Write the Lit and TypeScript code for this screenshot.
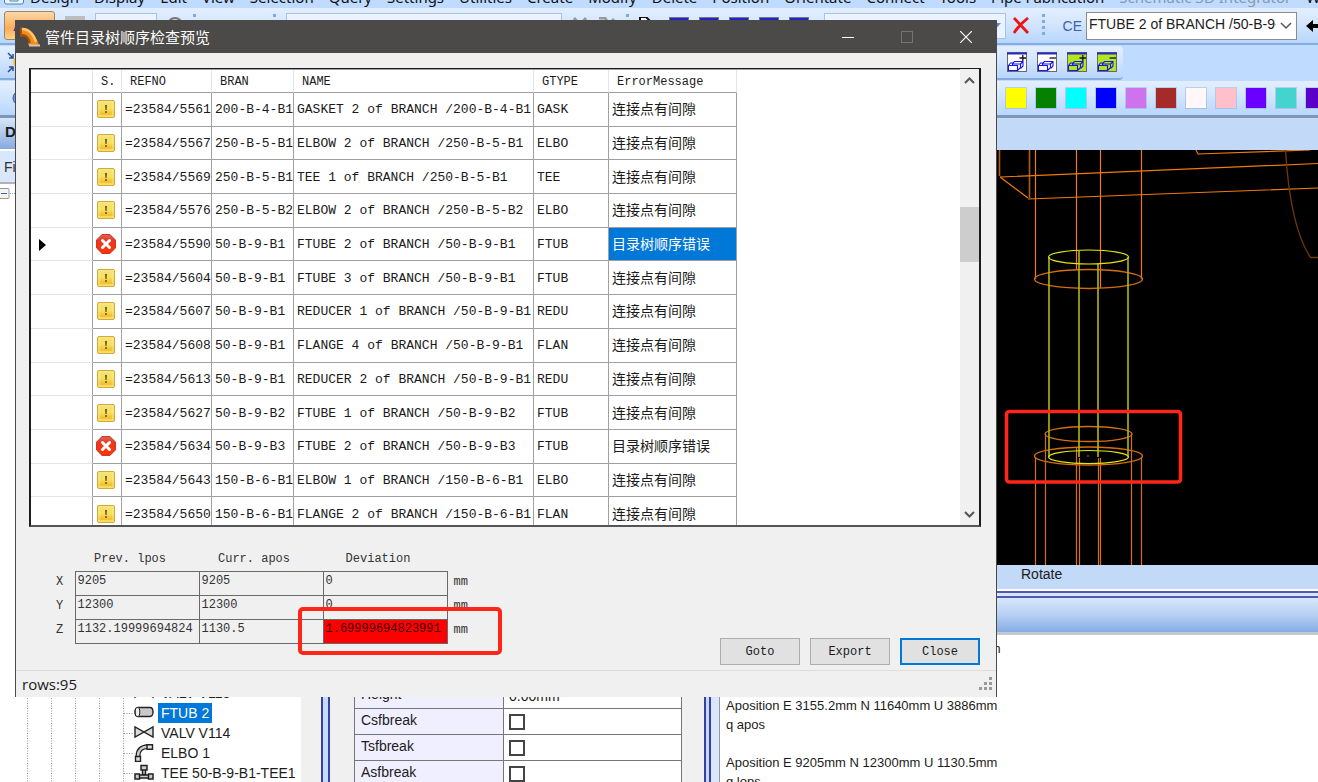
import { LitElement, html, css, svg } from "lit";
import { customElement, state } from "lit/decorators.js";
import { classMap } from "lit/directives/class-map.js";

interface Row {
  refno: string;
  bran: string;
  name: string;
  gtype: string;
  fault?: boolean;
}

const GAP_TEXT = "连接点有间隙";
const ORDER_TEXT = "目录树顺序错误";

const ROWS: Row[] = [
  { refno: "=23584/5561", bran: "200-B-4-B1", name: "GASKET 2", gtype: "GASK" },
  { refno: "=23584/5567", bran: "250-B-5-B1", name: "ELBOW 2", gtype: "ELBO" },
  { refno: "=23584/5569", bran: "250-B-5-B1", name: "TEE 1", gtype: "TEE" },
  { refno: "=23584/5576", bran: "250-B-5-B2", name: "ELBOW 2", gtype: "ELBO" },
  { refno: "=23584/5590", bran: "50-B-9-B1", name: "FTUBE 2", gtype: "FTUB", fault: true },
  { refno: "=23584/5604", bran: "50-B-9-B1", name: "FTUBE 3", gtype: "FTUB" },
  { refno: "=23584/5607", bran: "50-B-9-B1", name: "REDUCER 1", gtype: "REDU" },
  { refno: "=23584/5608", bran: "50-B-9-B1", name: "FLANGE 4", gtype: "FLAN" },
  { refno: "=23584/5613", bran: "50-B-9-B1", name: "REDUCER 2", gtype: "REDU" },
  { refno: "=23584/5627", bran: "50-B-9-B2", name: "FTUBE 1", gtype: "FTUB" },
  { refno: "=23584/5634", bran: "50-B-9-B3", name: "FTUBE 2", gtype: "FTUB", fault: true },
  { refno: "=23584/5643", bran: "150-B-6-B1", name: "ELBOW 1", gtype: "ELBO" },
  { refno: "=23584/5650", bran: "150-B-6-B1", name: "FLANGE 2", gtype: "FLAN" },
];

const warningIcon = html`<svg class="ico" width="20" height="20" viewBox="0 0 20 20" role="img" aria-label="warning">
  <defs><linearGradient id="wg" x1="0" y1="0" x2="0" y2="1"><stop offset="0" stop-color="#f3df72"/><stop offset=".45" stop-color="#f6e165"/><stop offset=".8" stop-color="#f2bf2c"/><stop offset="1" stop-color="#f7dc60"/></linearGradient></defs>
  <rect x="1.5" y="1.5" width="17" height="17" rx="1.5" fill="url(#wg)" stroke="#d3aa32"/>
  <rect x="3" y="3" width="14" height="14" fill="none" stroke="#f8eb9c" stroke-width=".8"/>
  <path d="M9 6h2l-.4 5H9.4z" fill="#6b5a20"/><rect x="9.200" y="12" width="1.600" height="2" fill="#6b5a20"/>
</svg>`;

const errorIcon = html`<svg class="ico" width="20" height="20" viewBox="0 0 20 20" role="img" aria-label="error">
  <defs><linearGradient id="eg" x1="0" y1="0" x2="0" y2="1"><stop offset="0" stop-color="#d96a5a"/><stop offset=".3" stop-color="#e83a24"/><stop offset="1" stop-color="#ff3403"/></linearGradient></defs>
  <path d="M6 .6h8L19.400 6v8L14 19.400H6L.6 14V6z" fill="url(#eg)" stroke="#cf2a1a"/>
  <path d="M6.500 6.500l7 7M13.500 6.500l-7 7" stroke="#fff" stroke-width="3" stroke-linecap="round"/>
</svg>`;

@customElement("check-dialog")
export class CheckDialog extends LitElement {
  @state() private current = 4;

  static styles = css`
    :host {
      display: flex;
      flex-direction: column;
      box-sizing: border-box;
      background: #f0f0f0;
      border-left: 1px solid #4b4a48;
      border-right: 1px solid #4b4a48;
      font-family: "Liberation Mono", "Noto Sans CJK SC", monospace;
      font-size: 12px;
      color: #1a1a1a;
    }
    button { font: inherit; color: inherit; }
    .title {
      display: flex;
      align-items: center;
      height: 33px;
      padding-right: 1px;
      background: #4b4a48;
      color: #fff;
      font-family: "Noto Sans CJK SC", sans-serif;
    }
    .title svg.pipe { margin: 0 4px; }
    h1 { flex: 1; margin: 0; font-size: 15px; line-height: 33px; font-weight: 400; }
    .title button {
      width: 59px;
      height: 33px;
      padding: 0;
      border: 0;
      background: none;
      display: grid;
      place-items: center;
    }
    .pane {
      flex: 1;
      min-height: 0;
      display: flex;
      margin: 15px 15px 0 13px;
      border: 2px solid #1c1c1c;
      border-bottom-color: #555;
      border-top-width: 1px;
      background: #fff;
      overflow: hidden;
    }
    .scroll { flex: 1; overflow: hidden; border-top: 1px solid #a0a0a0; }
    .list {
      border-collapse: separate;
      border-spacing: 0;
      table-layout: fixed;
      width: 706px;
      height: 461px;
      font-size: 13px;
    }
    .list th, .list td {
      box-sizing: border-box;
      padding: 2px 0 0 3px;
      border-right: 1px solid #a0a0a0;
      border-bottom: 1px solid #a0a0a0;
      font-weight: 400;
      text-align: left;
      white-space: nowrap;
      line-height: 16px;
    }
    .list thead th { height: 23px; padding-left: 8px; font-size: 12px; border-right-color: #e5e5e5; }
    .list tbody th { border-bottom-color: #e5e5e5; padding-left: 8px; }
    .list td.state { padding-top: 0; }
    .list td.msg { font-size: 14px; }
    .list td.on { background: #0078d7; color: #fff; }
    .ico { display: block; }
    .c0 { width: 62px; } .c1 { width: 29px; } .c2 { width: 90px; } .c3 { width: 82px; }
    .c4 { width: 240px; } .c5 { width: 75px; } .c6 { width: 128px; }
    .bar { width: 19px; background: #f0f0f0; display: flex; flex-direction: column; }
    .bar button { height: 22px; padding: 0; border: 0; background: none; display: grid; place-items: center; }
    .track { flex: 1; padding-top: 116px; }
    .thumb { height: 55px; background: #cdcdcd; }
    .lower { display: flex; justify-content: space-between; align-items: flex-end; height: 144px; padding: 0 16px 0 32px; box-sizing: border-box; border-bottom: 1px solid #dcdcdc; }
    .dev { border-collapse: collapse; margin-bottom: 26px; color: #333; table-layout: fixed; width: 427px; }
    .dev th, .dev td { padding: 0; font-weight: 400; text-align: left; }
    .dev thead th { height: 24px; line-height: 24px; text-align: center; vertical-align: top; padding-right: 14px; }
    .dev tbody td, .dev tbody th { height: 23px; line-height: 18px; vertical-align: top; }
    .dev tbody th { padding-left: 8px; line-height: 20px; }
    .dev td.val { border: 1px solid #696969; padding-left: 2px; white-space: nowrap; }
    .dev td.unit { padding-left: 6px; line-height: 20px; }
    .dev td.bad { background: #f00; color: #3a0000; }
    .k0 { width: 27px; } .k1 { width: 124px; } .k2 { width: 28px; }
    .actions { display: flex; gap: 10px; padding-bottom: 5px; }
    .actions button { width: 80px; height: 27px; padding: 0; border: 1px solid #adadad; background: #e1e1e1; }
    .actions button.primary { border: 2px solid #0078d7; }
    footer { display: flex; justify-content: space-between; align-items: center; height: 26px; padding: 0 3px 0 6px; font: 15px "Open Sans", sans-serif; }
  `;

  render() {
    return html`
      <div class="title">
        <svg class="pipe" width="21" height="20" viewBox="0 0 21 20">
          <path d="M1 1c7 0 12 3 16 12l2 5H8l1-3C8 10 6 9 1 9z" fill="#f08a1d"/>
          <path d="M2 2c6 0 11 4 14 13" fill="none" stroke="#ffc56d" stroke-width="2.400"/>
          <path d="M2 8c4 0 7 3 8 8M1 0v10" fill="none" stroke="#a94d06" stroke-width="1.800"/>
          <path d="M9 18.500h11" stroke="#d9c5ad" stroke-width="2"/>
        </svg>
        <h1>管件目录树顺序检查预览</h1>
        <button aria-label="Minimize"><svg width="12" height="12"><path d="M0 6.500h12" stroke="#fff" shape-rendering="crispEdges"/></svg></button>
        <button aria-label="Maximize"><svg width="12" height="12"><rect x=".5" y=".5" width="11" height="11" fill="none" stroke="#757472"/></svg></button>
        <button aria-label="Close window"><svg width="12" height="12"><path d="M0 0l12 12M12 0L0 12" stroke="#fff" stroke-width="1.200"/></svg></button>
      </div>
      <div class="pane">
        <div class="scroll">
          <table class="list">
            <colgroup>${[0, 1, 2, 3, 4, 5, 6].map((i) => html`<col class="c${i}">`)}</colgroup>
            <thead><tr>${["", "S.", "REFNO", "BRAN", "NAME", "GTYPE", "ErrorMessage"].map((h) => html`<th scope="col">${h}</th>`)}</tr></thead>
            <tbody>
              ${ROWS.map((r, i) => html`<tr @click=${() => (this.current = i)}>
                <th>${i === this.current ? html`<svg class="ico" width="7" height="12"><path d="M0 0v12l7-6z" fill="#000"/></svg>` : ""}</th>
                <td class="state">${r.fault ? errorIcon : warningIcon}</td>
                <td>${r.refno}</td>
                <td>${r.bran}</td>
                <td>${r.name} of BRANCH /${r.bran}</td>
                <td>${r.gtype}</td>
                <td class=${classMap({ msg: true, on: i === this.current })}>${r.fault ? ORDER_TEXT : GAP_TEXT}</td>
              </tr>`)}
            </tbody>
          </table>
        </div>
        <div class="bar">
          <button aria-label="Scroll up"><svg width="11" height="7"><path d="M1 6l4.500-4.500L10 6" fill="none" stroke="#555" stroke-width="2"/></svg></button>
          <div class="track"><div class="thumb"></div></div>
          <button aria-label="Scroll down"><svg width="11" height="7"><path d="M1 1l4.500 4.500L10 1" fill="none" stroke="#555" stroke-width="2"/></svg></button>
        </div>
      </div>
      <div class="lower">
        <table class="dev">
          <colgroup><col class="k0"><col class="k1"><col class="k1"><col class="k1"><col class="k2"></colgroup>
          <thead><tr><td></td><th scope="col">Prev. lpos</th><th scope="col">Curr. apos</th><th scope="col">Deviation</th><td></td></tr></thead>
          <tbody>
            ${[["X", "9205", "9205", "0"], ["Y", "12300", "12300", "0"], ["Z", "1132.19999694824", "1130.5", "1.69999694823991"]].map(
              ([axis, prev, curr, dev]) => html`<tr>
                <th scope="row">${axis}</th><td class="val">${prev}</td><td class="val">${curr}</td>
                <td class=${classMap({ val: true, bad: dev !== "0" })}>${dev}</td><td class="unit">mm</td></tr>`
            )}
          </tbody>
        </table>
        <div class="actions"><button>Goto</button><button>Export</button><button class="primary">Close</button></div>
      </div>
      <footer>
        <span>rows:95</span>
        <svg width="14" height="14" fill="#9a9a9a"><path d="M10 0h3v3h-3zM5 5h3v3H5zM10 5h3v3h-3zM0 10h3v3H0zM5 10h3v3H5zM10 10h3v3h-3z"/></svg>
      </footer>`;
  }
}

const wire = svg`
  <g fill="none" stroke="#f07a0a" stroke-width="1.200">
    <path d="M999.500 150v26M1029.500 150v48" stroke="#b05c0c" stroke-width="1.600"/>
    <path d="M1035.500 150v129M1076.500 150v119M1100.500 150v138M1141.500 150v129"/>
    <path d="M1000 177L1318 163.500M1000 177l28 21M1028 199L1318 188M1196 150l2 4L1310 150"/>
    <path d="M1035.500 457v108M1045.500 434v131M1076.500 447v118M1079.500 458v107M1098.500 458v107M1100.500 458v107M1131.500 434v131M1141.500 457v108" stroke="#d8700c"/>
  </g>
  <g fill="none" stroke="#d46e0c" stroke-width="1.300">
    <ellipse cx="1088.500" cy="279" rx="54" ry="9.500"/><ellipse cx="1088.500" cy="434" rx="43.500" ry="7.500"/><ellipse cx="1088.500" cy="456" rx="54" ry="9"/>
    <path d="M1285.500 150c3 50 12 88 25 107.500h8" stroke="#703806"/>
  </g>
  <g fill="none" stroke="#e4e410" stroke-width="1.200">
    <path d="M1049 257v200M1079 251v206M1098 264v193M1128 257v200" stroke="#b4b40c" stroke-width="1.600"/>
    <ellipse cx="1088.500" cy="257" rx="40" ry="7"/><ellipse cx="1088.500" cy="457" rx="40" ry="6.500"/>
    <path d="M1087 456h2" stroke="#a06a0c"/>
  </g>
  <rect x="1006.500" y="411.500" width="174" height="70.500" rx="3" fill="none" stroke="#fe2616" stroke-width="3.600"/>`;

const SWATCHES = ["#ffff00", "#058000", "#00ffff", "#0000ff", "#cf72ee", "#a52a2a", "#fff7f8", "#ffc0cb", "#6a00ff", "#45d3d0", "#5b00c8"];
const MENU = ["Design", "Display", "Edit", "View", "Selection", "Query", "Settings", "Utilities", "Create", "Modify", "Delete", "Position", "Orientate", "Connect", "Tools", "Pipe Fabrication"];

const boxIcon = (green: boolean, minus: boolean) => html`<button aria-label=${minus ? "Remove from view" : "Add to view"}>
  <svg width="20" height="20" viewBox="0 0 20 20">
    <rect x=".5" y=".5" width="19" height="19" fill=${green ? "#b5e61d" : "#fff"} stroke="#686868"/>
    <path d="M0 1.500h20" stroke="#2a2ac8" stroke-width="2"/>
    <path d="M1.500 13.500h9v5h-9zM1.500 13.500l2-2.500h2.500M10.500 18.500l2.500-2.500M5.500 13.500v-2l2-2h8.500v4.500l-2.500 2.500M5.500 12h8v4M13.500 12l2.500-2.500" fill="none" stroke="#1616ee" stroke-width="1.100"/>
    <path d=${minus ? "M12.500 6h6.500" : "M12.500 6h6.500M15.800 3v6"} stroke="#111" stroke-width="1.300"/>
  </svg></button>`;

const windowIcon = html`<svg width="20" height="18"><rect x=".5" y=".5" width="19" height="17" fill="#fff" stroke="#777"/><path d="M1 2.500h18" stroke="#2222cc" stroke-width="3"/></svg>`;

const TREE_ICONS: Record<string, unknown> = {
  valve: svg`<path d="M1 3v10L19 3v10z" fill="#ddd" stroke="#222" stroke-width="1.400"/>`,
  tube: svg`<path d="M4 3.500h12c4 0 4 9 0 9H4c-4 0-4-9 0-9z" fill="#c9c9c9" stroke="#222" stroke-width="1.400"/><ellipse cx="3.500" cy="8" rx="2.300" ry="4.500" fill="#eee" stroke="#222"/>`,
  elbow: svg`<path d="M4 12C4 5 8 3 14 2.500" fill="none" stroke="#222" stroke-width="5"/><path d="M4 12C4 5 8 3 14 2.500" fill="none" stroke="#ccc" stroke-width="2.400"/><path d="M1.500 12.500h5v5h-5zM13 .7v4.500h5.500V.7z" fill="#ddd" stroke="#222" stroke-width="1.400"/>`,
  tee: svg`<path d="M7 1.500h6v4.500h-6zM8.500 6h3v4.500h-3zM1 10h4.500v5H1zM14.500 10h4.500v5h-4.500zM5.500 11h9v3h-9z" fill="#ccc" stroke="#222" stroke-width="1.500"/>`,
};

@customElement("app-root")
export class AppRoot extends LitElement {
  static styles = css`
    :host {
      display: flex;
      flex-direction: column;
      position: relative;
      height: 100vh;
      min-height: 400px;
      overflow: hidden;
      background: #bfdbff;
      font-family: "Liberation Sans", sans-serif;
      font-size: 14px;
      color: #1c1c1c;
    }
    button { font: inherit; padding: 0; border: 0; background: none; display: block; }
    button svg { display: block; }
    nav { display: flex; align-items: flex-end; height: 8px; padding-left: 4px; gap: 15px; font: 15px/22px "Noto Sans", sans-serif; white-space: nowrap; }
    nav a { color: #111; text-decoration: none; }
    nav a.off { color: #8a98ab; }
    .logo { align-self: flex-start; margin-right: -9px; flex: none; }
    .tools { display: flex; align-items: center; box-sizing: border-box; background: linear-gradient(#e3efff, #d3e5ff 45%, #b8d6fd); border-bottom: 2px solid #86abe0; }
    .one { height: 37px; padding-left: 4px; gap: 10px; margin-bottom: 1px; flex: none; }
    .one > * { flex: none; }
    .hot { width: 51px; height: 29px; border: 1px solid #a08560; border-radius: 3px; background: linear-gradient(#fbd8ac, #f9ad56 60%, #fdd28a); color: #1f3fb0; font-weight: 700; text-align: left; padding-left: 8px; }
    .grey { width: 20px; height: 20px; background: #bdbdbd; }
    .drop { position: relative; display: flex; box-sizing: border-box; height: 26px; border: 1px solid #a9c3e8; background: #eaf3ff; align-items: center; }
    .drop svg { position: absolute; right: 4px; pointer-events: none; }
    select { appearance: none; flex: 1; width: 100%; height: 100%; border: 0; background: none; padding: 0 18px 0 3px; font: inherit; color: #1c1c1c; border-radius: 0; }
    .small { width: 62px; } .wide { width: 276px; } .mid { width: 182px; }
    .ce { width: 211px; height: 28px; border-color: #8c8c8c; background: #fff; }
    .ce select { padding: 0 20px 4px 2px; }
    .pipeline { width: 57px; box-sizing: border-box; padding-left: 4px; color: #15428b; font-weight: 700; font-size: 13px; }
    .dots { width: 3px; height: 24px; background: repeating-linear-gradient(#86a9dc 0 3px, transparent 3px 6px); }
    .right { display: flex; align-items: center; margin-left: auto; gap: 6px; }
    .right .dots { margin: 0 12px 0 6px; }
    .right label { display: flex; align-items: center; gap: 4px; color: #3a63a8; }
    .right .back { margin-left: 3px; width: 12px; overflow: hidden; }
    .two { height: 34px; flex: none; align-self: flex-start; width: calc(100% - 195px); border-radius: 0 4px 4px 0; justify-content: flex-end; gap: 10px; padding-right: 6px; }
    .two .compass { margin-right: auto; }
    .three { height: 37px; flex: none; justify-content: flex-end; gap: 10px; border-bottom: 3px solid #7f96b5; margin-top: 1px; overflow: hidden; }
    .three .sw { flex: none; width: 20px; height: 20px; box-shadow: 0 0 0 1px rgba(120, 150, 200, .35); }
    .three .ball { margin-right: auto; margin-left: 12px; }
    .three .sw:last-child { margin-right: -8px; }
    main { flex: 1; display: flex; min-height: 0; }
    aside { width: 321px; flex: none; display: flex; flex-direction: column; background: #f0f0f0; overflow: hidden; }
    aside h2 { margin: 0; height: 31px; line-height: 28px; padding-left: 5px; font-size: 15px; background: linear-gradient(#d8e7fb, #86aade); border-bottom: 2px solid #fff; }
    .filter { height: 33px; line-height: 32px; padding-left: 4px; background: #d8e7fb; border-bottom: 2px solid #b0b4ba; box-sizing: border-box; color: #333; }
    .tree { flex: 1; width: 301px; background: #fff; overflow: hidden; }
    .root { display: flex; align-items: center; height: 20px; }
    .leaves { margin-top: 479px; padding-left: 27px; }
    .leaf { display: flex; align-items: center; height: 20px; }
    .leaf svg { flex: none; }
    .label { margin-left: 4px; padding: 0 3px; line-height: 20px; white-space: nowrap; }
    .label.sel { background: #0078d7; color: #fff; }
    .split { flex: none; width: 9px; box-sizing: border-box; background: #c4dbfb; border-left: 2px solid #3a3fa8; border-right: 2px solid #3a3fa8; }
    .stage { flex: 1; min-width: 0; display: flex; flex-direction: column; }
    .strip { height: 32px; flex: none; background: #c3d9f8; }
    .view { display: block; width: 100%; height: 415px; flex: none; background: #000; }
    .tabs { flex: none; height: 24px; line-height: 19px; padding-left: 691px; background: #c3d9f8; border-bottom: 2px solid #fff; }
    .sash { flex: none; height: 3px; background: #d8e7fb; border-top: 2px solid #5358b4; border-bottom: 2px solid #5358b4; }
    .bottom { flex: 1; display: flex; min-height: 0; background: #f0f0f0; }
    .form { width: 374px; flex: none; padding: 84px 22px 0 24px; box-sizing: border-box; overflow: hidden; }
    .form table { width: 100%; border-collapse: collapse; table-layout: fixed; background: #fff; }
    .form th, .form td { height: 26px; padding: 0 5px; border: 1px solid #777; text-align: left; font-weight: 400; line-height: 18px; box-sizing: border-box; }
    .form th { width: 149px; background: #f0efff; padding: 0 6px 4px; }
    input { appearance: none; display: block; width: 16px; height: 16px; margin: 0; border: 2px solid #444; background: #fff; }
    .console { flex: 1; min-width: 0; display: flex; flex-direction: column; background: #fff; }
    .band { height: 34px; flex: none; background: linear-gradient(#d8e7fb, #b7cff2 50%, #86ade4); border-bottom: 3px solid #c4c8d0; }
    .log { flex: 1; border-left: 1px solid #999; margin-left: 8px; padding: 4px 6px; font-size: 13px; line-height: 19px; overflow: hidden; box-shadow: -8px 0 #d8e7fb; }
    .log p { margin: 0; min-height: 19px; white-space: nowrap; }
    .log .tail { padding-left: 253px; }
    .narrow { width: 7px; }
    check-dialog { position: absolute; left: 15px; right: 321px; top: 20px; bottom: 85px; }
    .mark { position: absolute; left: 298px; bottom: 127px; width: 204px; height: 48px; box-sizing: border-box; border: 4px solid #fe2616; border-radius: 5px; }
  `;

  private leaf(icon: string, text: string, sel = false) {
    return html`<div class="leaf">
      <svg width="107" height="20"><path d="M.5 0v20M24.500 0v20M48.500 0v20M72.500 0v20M96.500 0v20M97 10.500h10" stroke="#999" stroke-dasharray="1 1.500"/></svg>
      <svg width="20" height="18" viewBox="0 0 20 18">${TREE_ICONS[icon]}</svg>
      <span class=${classMap({ label: true, sel })}>${text}</span>
    </div>`;
  }

  render() {
    return html`
      <nav>
        <svg class="logo" width="20" height="5"><path d="M.5 0v2q0 2 2 2h15q2 0 2-2V0" fill="#e8f3fa" stroke="#4e86a8"/><path d="M6 0v1h8V0" stroke="#4e86a8" fill="none"/></svg>
        ${MENU.map((m) => html`<a href="#">${m}</a>`)}<a class="off" href="#">Schematic 3D Integrator</a><a href="#">Window</a>
      </nav>
      <div class="tools one">
        <button class="hot">A</button>
        <span class="grey"></span>
        <span class="drop small"><select aria-label="Style"><option>Gridline</option></select></span>
        <svg width="16" height="20"><circle cx="8" cy="9" r="7" fill="#ddd" stroke="#777" stroke-width="2"/></svg>
        <span class="dots"></span>
        <span class="pipeline">Pipeline</span>
        <span class="dots"></span>
        <span class="drop wide"><select aria-label="Level"><option>Level Default</option></select></span>
        <svg width="16" height="18"><path d="M2 1l12 15M14 1L2 16" stroke="#999" stroke-width="3"/></svg>
        <svg width="18" height="18"><path d="M1 1h6l8 14M16 2L6 14" stroke="#999" stroke-width="3" fill="none"/></svg>
        <span class="dots"></span>
        <svg width="20" height="18"><path d="M1 0h6l5 5v12H1z" fill="#fff" stroke="#111" stroke-width="2"/></svg>
        ${[0, 1, 2, 3, 4].map(() => windowIcon)}
        <div class="right">
          <span class="drop mid"><select aria-label="Member"><option>Modeller</option></select><svg width="9" height="6"><path d="M0 0h9L4.500 5z" fill="#5b86c4"/></svg></span>
          <button aria-label="Delete"><svg width="18" height="18"><path d="M2 1l14 15M16 1Q7 8 2 16" fill="none" stroke="#f01515" stroke-width="2.800"/></svg></button>
          <span class="dots"></span>
          <label>CE
            <span class="drop ce"><select><option>FTUBE 2 of BRANCH /50-B-9-</option></select><svg width="12" height="8"><path d="M1 1l5 5 5-5" fill="none" stroke="#555" stroke-width="1.500"/></svg></span>
          </label>
          <button class="back" aria-label="Back"><svg width="18" height="14"><path d="M0 7l7-6v4h9v4H7v4z" fill="#000"/></svg></button>
        </div>
      </div>
      <div class="tools two">
        <svg class="compass" width="24" height="28"><path d="M8 5l5 5m0-4v4h-4M8 24l5-5m0 4v-4h-4" fill="none" stroke="#2c4e94" stroke-width="1.500"/><circle cx="19" cy="14" r="6" fill="#f6c832"/></svg>
        ${boxIcon(false, false)}${boxIcon(false, true)}${boxIcon(true, false)}${boxIcon(true, true)}
      </div>
      <div class="tools three">
        <svg class="ball" width="16" height="16"><circle cx="8" cy="8" r="7" fill="#6d95dc" stroke="#3360b4"/></svg>
        ${SWATCHES.map((c) => html`<button class="sw" aria-label="Colour ${c}" style="background:${c}"></button>`)}
      </div>
      <main>
        <aside>
          <h2>Design Explorer</h2>
          <div class="filter">Filter</div>
          <div class="tree">
            <div class="root"><svg width="18" height="12"><rect x="-2" y=".5" width="11" height="10" rx="1" fill="#f4f4f4" stroke="#999"/><path d="M1 5.500h6" stroke="#3b5fae"/><path d="M10 5.500h8" stroke="#999" stroke-dasharray="1 1"/></svg></div>
            <div class="leaves">
              ${this.leaf("valve", "VALV V113")}
              ${this.leaf("tube", "FTUB 2", true)}
              ${this.leaf("valve", "VALV V114")}
              ${this.leaf("elbow", "ELBO 1")}
              ${this.leaf("tee", "TEE 50-B-9-B1-TEE1")}
            </div>
          </div>
        </aside>
        <div class="split"></div>
        <div class="stage">
          <div class="strip"></div>
          <svg class="view" viewBox="330 150 988 415" preserveAspectRatio="xMaxYMid slice">${wire}</svg>
          <div class="tabs">Rotate</div>
          <div class="sash"></div>
          <div class="bottom">
            <div class="form">
              <table>
                <tr><th scope="row">Height</th><td>0.00mm</td></tr>
                ${["Csfbreak", "Tsfbreak", "Asfbreak"].map((n) => html`<tr><th scope="row"><label for=${n}>${n}</label></th><td><input id=${n} type="checkbox"></td></tr>`)}
              </table>
            </div>
            <div class="split narrow"></div>
            <div class="console">
              <div class="band"></div>
              <div class="log">
                <p class="tail">mm</p>
                <p></p><p></p>
                <p>Aposition E 3155.2mm N 11640mm U 3886mm</p>
                <p>q apos</p><p></p>
                <p>Aposition E 9205mm N 12300mm U 1130.5mm</p>
                <p>q lops</p>
              </div>
            </div>
          </div>
        </div>
      </main>
      <check-dialog></check-dialog>
      <div class="mark"></div>`;
  }
}
